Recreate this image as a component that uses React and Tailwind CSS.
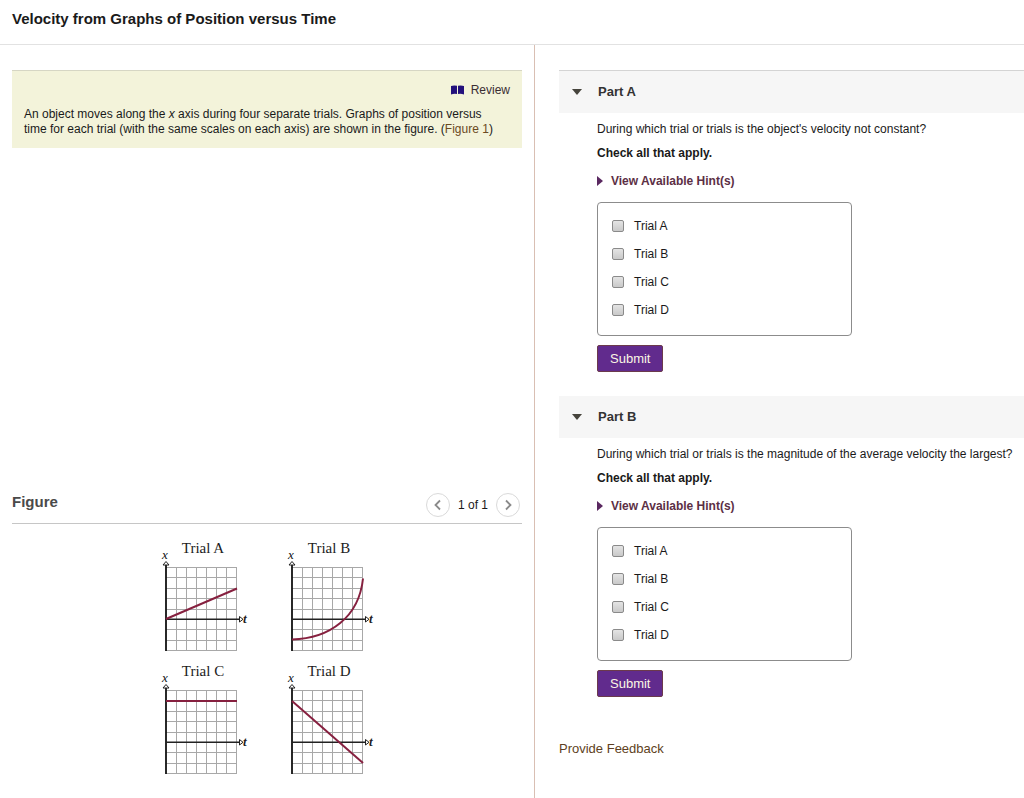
import React from "react";

const COLUMNS = [1, 2, 3, 4, 5, 6, 7];
const ROWS = [0, 1, 2, 3, 4, 6, 7, 8];
const TRIALS = ["A", "B", "C", "D"];

const CURVES = {
  A: "M8 78 L79 47.5",
  B: "M8 98.5 C46 97.5 75 76 79 37.5",
  C: "M8 37 H79",
  D: "M8 37 L79 99",
};

function TrialGraph({ name }) {
  return (
    <svg
      viewBox="0 0 100 112"
      className="h-28 w-[100px] font-['Liberation_Serif',serif]"
      role="img"
      aria-label={`Trial ${name}`}
    >
      <text x="45" y="12" textAnchor="middle" fontSize="15" fill="#1c1c1c">
        Trial {name}
      </text>
      <text x="4" y="18" fontSize="13" fontStyle="italic" fill="#111">
        x
      </text>
      <g stroke="#a8a8a8" strokeWidth="1" shapeRendering="crispEdges">
        {COLUMNS.map((c) => (
          <line key={c} x1={8 + c * 10.1} x2={8 + c * 10.1} y1="26" y2="110" />
        ))}
        {ROWS.map((r) => (
          <line key={r} x1="8" x2="79" y1={26.5 + r * 10.4} y2={26.5 + r * 10.4} />
        ))}
      </g>
      <path d="M8 22 V110" stroke="#111" strokeWidth="1.8" />
      <path d="M8 78.3 H83" stroke="#222" strokeWidth="1.5" />
      <path d="M5 24 L8 20.5 L11 24 Z" fill="#fff" stroke="#222" strokeWidth="1" />
      <path d="M81.5 75.5 L85 78.3 L81.5 81 Z" fill="#fff" stroke="#222" strokeWidth="1" />
      <path d={CURVES[name]} fill="none" stroke="#86203f" strokeWidth="2" />
      <text x="85" y="82" fontSize="13" fontStyle="italic" fontWeight="bold" fill="#222">
        t
      </text>
    </svg>
  );
}

function Part({ letter, question, bordered }) {
  return (
    <section>
      <h2 className={bordered ? "border-t border-[#d4d4d4]" : ""}>
        <button
          type="button"
          aria-expanded="true"
          className="flex h-[42px] w-full items-center gap-[15px] bg-[#f6f6f6] pl-3 text-left text-[13px] font-bold text-[#333]"
        >
          <svg viewBox="0 0 12 6" className="h-1.5 w-3" aria-hidden="true">
            <path d="M1 0 H11 L6 6 Z" fill="#46443c" />
          </svg>
          Part {letter}
        </button>
      </h2>
      <div className="pt-2 pl-[38px] text-[12px] leading-4">
        <p>{question}</p>
        <p className="mt-2 font-bold">Check all that apply.</p>
        <button
          type="button"
          aria-expanded="false"
          className="mt-3 flex items-center gap-2 font-bold text-[#5c2f45]"
        >
          <svg viewBox="0 0 6 10" className="h-2.5 w-1.5" aria-hidden="true">
            <path d="M0 0 L6 5 L0 10 Z" fill="#5a2860" />
          </svg>
          View Available Hint(s)
        </button>
        <form onSubmit={(e) => e.preventDefault()} className="mt-[13px]">
          <fieldset
            aria-label={`Part ${letter} answers`}
            className="w-[255px] rounded border border-[#8c8c8c] px-[14px] pt-[9px] pb-[11px]"
          >
            {TRIALS.map((t) => (
              <label key={t} className="flex h-7 items-center gap-[10px]">
                <input
                  type="checkbox"
                  className="size-3 appearance-none rounded-xs border border-[#8a8a8a] bg-linear-to-b from-[#e4e4e4] to-[#c9c9c9] checked:bg-[#5e2d8c]"
                />
                Trial {t}
              </label>
            ))}
          </fieldset>
          <button
            type="submit"
            className="mt-[9px] h-[27px] rounded-xs border border-[#6b3a4c] bg-[#612b8d] px-3 text-[13px] text-[#fbf6e4]"
          >
            Submit
          </button>
        </form>
      </div>
    </section>
  );
}

function PageButton({ label, path }) {
  return (
    <button
      type="button"
      aria-label={label}
      className="flex size-6 items-center justify-center rounded-full border border-[#dadada]"
    >
      <svg viewBox="0 0 12 12" className="size-3" fill="none" stroke="#8a8a8a" strokeWidth="1.8" aria-hidden="true">
        <path d={path} />
      </svg>
    </button>
  );
}

export default function App() {
  return (
    <div className="flex min-h-screen flex-col bg-white font-['Liberation_Sans',Arial,sans-serif] text-[#1a1a1a]">
      <header className="border-b border-[#e2e2e2] px-3 pt-2 pb-[15px]">
        <h1 className="text-[15px] leading-[21px] font-bold">
          Velocity from Graphs of Position versus Time
        </h1>
      </header>
      <div className="grid grow grid-cols-[minmax(0,535fr)_minmax(0,489fr)]">
        <div className="flex flex-col justify-between border-r border-[#d9bfb3] px-3 pt-[25px] pb-6">
          <div className="border-t border-[#d6d6c4] bg-[#f3f3da] px-3 pt-2.5 pb-[11px]">
            <a
              href="#review"
              className="flex items-center justify-end gap-[7px] text-[12px] leading-[18px] text-[#3a2d33]"
            >
              <svg viewBox="0 0 13 10" className="h-2.5 w-[13px]" aria-hidden="true">
                <path
                  d="M0 1 Q3 0 6 0.8 V9 Q3 8.4 0 9.5 Z M7 0.8 Q10 0 13 1 V9.5 Q10 8.4 7 9 Z"
                  fill="#23107c"
                />
              </svg>
              Review
            </a>
            <p className="mt-2 text-[12px] leading-[15px]">
              An object moves along the <i>x</i> axis during four separate trials. Graphs of position versus{" "}
              <br className="hidden lg:inline" />
              time for each trial (with the same scales on each axis) are shown in the figure. (
              <a href="#figure" className="text-[#6b4a22]">
                Figure 1
              </a>
              )
            </p>
          </div>
          <section id="figure">
            <div className="flex items-center justify-between border-b border-[#c6c6c6] pr-0.5 pb-[5px]">
              <h2 className="pb-1.5 text-[15px] leading-5 font-bold text-[#4a4a4a]">Figure</h2>
              <div className="flex items-center gap-2 text-[12px]">
                <PageButton label="Previous figure" path="M8 1.5 L3.5 6 L8 10.5" />
                <span>1 of 1</span>
                <PageButton label="Next figure" path="M4 1.5 L8.5 6 L4 10.5" />
              </div>
            </div>
            <div className="grid grid-cols-[auto_auto] justify-center gap-x-[26px] gap-y-[11px] pt-[17px] pl-2">
              {TRIALS.map((t) => (
                <TrialGraph key={t} name={t} />
              ))}
            </div>
          </section>
        </div>
        <main className="pt-[25px] pb-10 pl-6">
          <div className="flex flex-col gap-6">
            <Part
              letter="A"
              bordered
              question="During which trial or trials is the object's velocity not constant?"
            />
            <Part
              letter="B"
              question="During which trial or trials is the magnitude of the average velocity the largest?"
            />
          </div>
          <a href="#feedback" className="mt-11 inline-block text-[13px] leading-4 text-[#5e3f22]">
            Provide Feedback
          </a>
        </main>
      </div>
    </div>
  );
}
